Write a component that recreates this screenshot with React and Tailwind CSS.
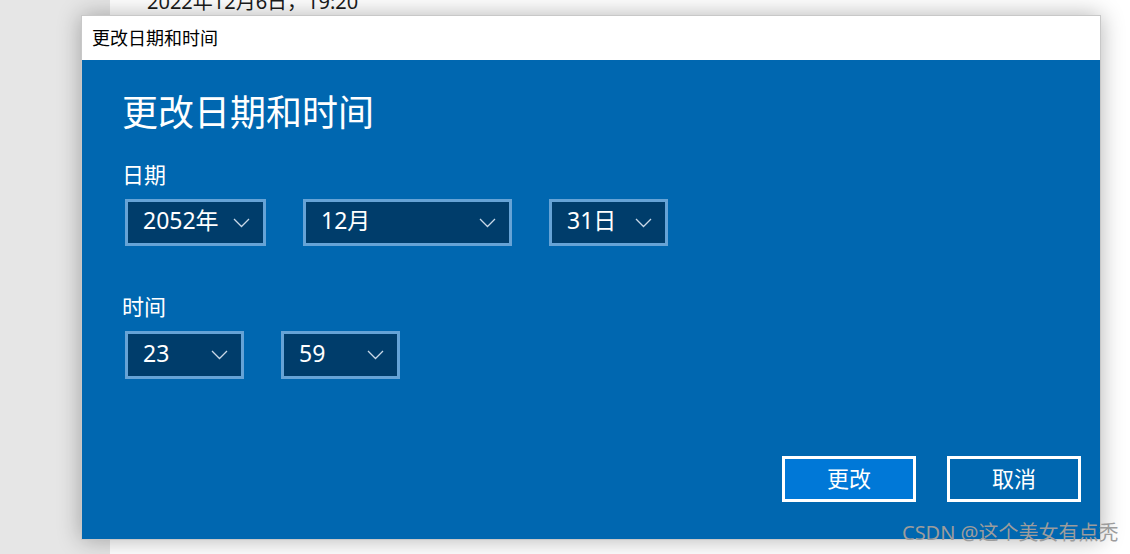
import React from "react";

const FONT = { fontFamily: '"Noto Sans", "Noto Sans CJK SC", sans-serif' };

// 下拉框右侧的细箭头
const Chevron = () => (
  <svg width="17" height="10" viewBox="0 0 17 10" className="shrink-0">
    <polyline
      points="1,1 8.5,8.5 16,1"
      fill="none"
      stroke="#c9d8e8"
      strokeWidth="1.3"
    />
  </svg>
);

const Combo = ({ value, width, height = "h-[47px]" }) => (
  <div
    className={`${width} ${height} flex items-center justify-between border-[3px] border-[#66a3d6] bg-[#003d6b] pl-[15px] pr-[13px] text-[23px] text-white`}
  >
    <span className="pb-[4px] leading-none">{value}</span>
    <Chevron />
  </div>
);

const DialogButton = ({ label, primary }) => (
  <button
    className={`h-[46px] w-[134px] border-[3px] border-white pb-[2px] text-[22px] text-white ${
      primary ? "bg-[#0078d7]" : "bg-[#0067b0]"
    }`}
  >
    {label}
  </button>
);

export default function App() {
  return (
    <div
      className="relative flex h-[554px] w-[1130px] overflow-hidden bg-white"
      style={FONT}
    >
      {/* 左侧灰色导航栏 */}
      <div className="h-full w-[110px] shrink-0 bg-[#e6e6e6]" />

      {/* 设置页内容 */}
      <div className="flex-1 pl-[37px]">
        <div className="-mt-[11px] text-[20px] leading-[26px] text-[#1b1b1b]">
          2022年12月6日，19:20
        </div>
      </div>

      {/* 更改日期和时间 对话框 */}
      <div className="absolute left-[81px] top-[15px] flex h-[525px] w-[1020px] flex-col border border-[#c8c8c8] shadow-[0_0_22px_rgba(0,0,0,0.3)]">
        <div className="flex h-[44px] shrink-0 items-center bg-white pl-[10px] text-[18px] text-black">
          更改日期和时间
        </div>

        <div className="flex flex-1 flex-col bg-[#0067b0] pl-[40px] pr-[19px] pt-[31px] pb-[37px] text-white">
          <div className="text-[36px] leading-[44px]">更改日期和时间</div>

          <div className="mt-[24px] text-[22px] leading-[30px]">日期</div>
          <div className="mt-[10px] flex gap-[37px] pl-[3px]">
            <Combo value="2052年" width="w-[141px]" />
            <Combo value="12月" width="w-[209px]" />
            <Combo value="31日" width="w-[119px]" />
          </div>

          <div className="mt-[45px] text-[22px] leading-[30px]">时间</div>
          <div className="mt-[10px] flex gap-[37px] pl-[3px]">
            <Combo value="23" width="w-[119px]" height="h-[48px]" />
            <Combo value="59" width="w-[119px]" height="h-[48px]" />
          </div>

          <div className="mt-auto flex justify-end gap-[31px]">
            <DialogButton label="更改" primary />
            <DialogButton label="取消" />
          </div>
        </div>
      </div>

      {/* 水印 */}
      <div className="absolute left-[902px] top-[520px] text-[20px] leading-[26px] text-[#9c9c9c]">
        CSDN @这个美女有点秃
      </div>
    </div>
  );
}
